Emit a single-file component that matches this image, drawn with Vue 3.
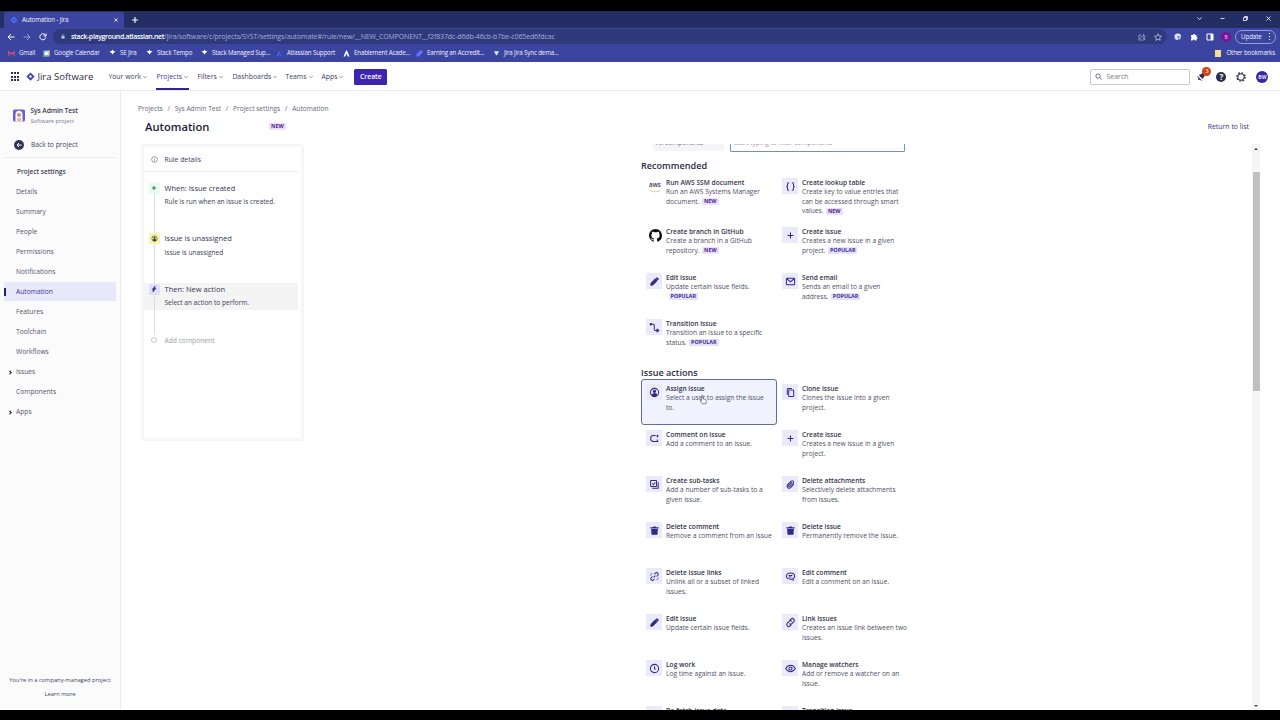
<script setup>
const icons = {
  edit: '<path fill="currentColor" d="M4.500 16 14 6.500l3.500 3.500L8 19.500 4 20.200zM16.300 4.800l1-1 3 3-1 1z"/>',
  braces: '<path d="M9 4H7.500C6 4 5.500 5 5.500 6.500v3C5.500 11 5 12 3.500 12 5 12 5.500 13 5.500 14.500v3C5.500 19 6 20 7.500 20H9M15 4h1.500c1.500 0 2 1 2 2.500v3c0 1.500.5 2.500 2 2.500-1.500 0-2 1-2 2.500v3c0 1.500-.5 2.500-2 2.500H15"/>',
  plus: '<path d="M12 5.500v13M5.500 12h13"/>',
  mail: '<rect x="3" y="5" width="18" height="14" rx="1.500"/><path d="m4 6 8 7 8-7"/>',
  transition: '<path d="M4 5h5.500a2 2 0 0 1 2 2v9.500a2 2 0 0 0 2 2H20"/><circle cx="4" cy="5" r="1.500" fill="currentColor"/><path d="m17.500 15.500 4 3-4 3z" fill="currentColor"/>',
  user: '<circle cx="12" cy="12" r="9"/><circle cx="12" cy="9.500" r="2.500" fill="currentColor"/><path fill="currentColor" d="M7 18c0-2.500 1.300-3.500 2.800-3.500h4.400c1.500 0 2.800 1 2.800 3.500-3 3-7 3-10 0z"/>',
  clone: '<rect x="8" y="6.500" width="11" height="14" rx="1.500"/><path d="M5 17V5a1.500 1.500 0 0 1 1.500-1.500H15"/>',
  comment: '<path d="M14.500 5.500H10a6.500 6.500 0 0 0 0 13h9.500l-1.500-2V14"/><path d="M18.500 4v5M16 6.500h5"/>',
  subtasks: '<rect x="3.500" y="3.500" width="13" height="13" rx="1"/><path d="m7 10 2.500 2.500L14 7.500M20 7v13H7"/>',
  clip: '<path d="m19.500 11.500-7.200 7.300a4.600 4.600 0 0 1-6.500-6.500L13.500 4.500a3.200 3.200 0 0 1 4.500 4.500l-7.300 7.400a1.700 1.700 0 0 1-2.500-2.400L15 7.300"/>',
  trash: '<path fill="currentColor" stroke="none" d="M3 5h5.500l1-1.500h5l1 1.500H21v2.500H3zM4.500 8.500h15L18.500 20a1.500 1.500 0 0 1-1.500 1.500H7A1.500 1.500 0 0 1 5.500 20z"/>',
  unlink: '<path d="m12 7 2-2.500a3.500 3.500 0 0 1 5 5L16.500 12M12 17l-2 2.500a3.500 3.500 0 0 1-5-5L7.500 12M10 14l4-4"/><path d="M5.500 4.500 7 6M3 8.500h2M17 18l1.500 1.500M19 15.500h2"/>',
  talk: '<path d="M12 4.500c5 0 9 2.800 9 6.700 0 2.500-1.500 4.200-3.500 5.300l.5 3.500-4.500-2.300c-6 .6-10.500-2.500-10.500-6.500 0-3.900 4-6.700 9-6.700zM8 10h8M8 13h6"/>',
  link: '<path d="m10 7.500 3-3a4 4 0 0 1 6 6l-4 4a4 4 0 0 1-6 0M14 16.500l-3 3a4 4 0 0 1-6-6l4-4a4 4 0 0 1 6 0"/>',
  clock: '<circle cx="12" cy="12" r="9"/><path d="M12 7v5.500l3 1.500"/>',
  eye: '<path d="M1.500 12C4.500 7 8 5 12 5s7.500 2 10.500 7c-3 5-6.500 7-10.500 7S4.500 17 1.500 12z"/><circle cx="12" cy="12" r="3.500"/>',
  refresh: '<path d="M19 12a7 7 0 1 1-2-5l2 2M19 4v5h-5"/>'
}
const recommended = [
  { icon: 'aws', title: 'Run AWS SSM document', lines: ['Run an AWS Systems Manager', 'document.'], tag: 'NEW' },
  { icon: 'braces', title: 'Create lookup table', lines: ['Create key to value entries that', 'can be accessed through smart', 'values.'], tag: 'NEW' },
  { icon: 'github', title: 'Create branch in GitHub', lines: ['Create a branch in a GitHub', 'repository.'], tag: 'NEW' },
  { icon: 'plus', title: 'Create issue', lines: ['Creates a new issue in a given', 'project.'], tag: 'POPULAR' },
  { icon: 'edit', title: 'Edit issue', lines: ['Update certain issue fields.', ''], tag: 'POPULAR' },
  { icon: 'mail', title: 'Send email', lines: ['Sends an email to a given', 'address.'], tag: 'POPULAR' },
  { icon: 'transition', title: 'Transition issue', lines: ['Transition an issue to a specific', 'status.'], tag: 'POPULAR' }
]
const actions = [
  { icon: 'user', title: 'Assign issue', lines: ['Select a user to assign the issue', 'to.'], active: true },
  { icon: 'clone', title: 'Clone issue', lines: ['Clones the issue into a given', 'project.'] },
  { icon: 'comment', title: 'Comment on issue', lines: ['Add a comment to an issue.'] },
  { icon: 'plus', title: 'Create issue', lines: ['Creates a new issue in a given', 'project.'] },
  { icon: 'subtasks', title: 'Create sub-tasks', lines: ['Add a number of sub-tasks to a', 'given issue.'] },
  { icon: 'clip', title: 'Delete attachments', lines: ['Selectively delete attachments', 'from issues.'] },
  { icon: 'trash', title: 'Delete comment', lines: ['Remove a comment from an issue'] },
  { icon: 'trash', title: 'Delete issue', lines: ['Permanently remove the issue.'] },
  { icon: 'unlink', title: 'Delete issue links', lines: ['Unlink all or a subset of linked', 'issues.'] },
  { icon: 'talk', title: 'Edit comment', lines: ['Edit a comment on an issue.'] },
  { icon: 'edit', title: 'Edit issue', lines: ['Update certain issue fields.'] },
  { icon: 'link', title: 'Link issues', lines: ['Creates an issue link between two', 'issues.'] },
  { icon: 'clock', title: 'Log work', lines: ['Log time against an issue.'] },
  { icon: 'eye', title: 'Manage watchers', lines: ['Add or remove a watcher on an', 'issue.'] },
  { icon: 'refresh', title: 'Re-fetch issue data', lines: [] },
  { icon: 'transition', title: 'Transition issue', lines: [] }
]
const sections = [
  { name: 'Recommended', items: recommended },
  { name: 'Issue actions', items: actions }
]
const bookmarks = [
  ['gmail', 'Gmail'], ['cal', 'Google Calendar'], ['stack', 'SE Jira'], ['stack', 'Stack Tempo'],
  ['stack', 'Stack Managed Sup...'], ['atl', 'Atlassian Support'], ['atlw', 'Enablement Acade...'],
  ['pen', 'Earning an Accredit...'], ['vee', 'Jira Jira Sync dema...']
]
const menu = ['Your work', 'Projects', 'Filters', 'Dashboards', 'Teams', 'Apps']
const settings = ['Details', 'Summary', 'People', 'Permissions', 'Notifications', 'Automation', 'Features', 'Toolchain', 'Workflows', 'Issues', 'Components', 'Apps']
const crumbs = ['Projects', 'Sys Admin Test', 'Project settings', 'Automation']
</script>

<template>
  <div class="screen">
    <div class="tabs">
      <div class="tab">
        <svg class="jira-tab" viewBox="0 0 24 24"><path fill="#4a6cff" fill-rule="evenodd" d="M12 1 23 12 12 23 1 12zM12 8l-4 4 4 4 4-4z" /></svg>
        <span>Automation - Jira</span>
        <svg class="x" viewBox="0 0 10 10"><path d="m1 1 8 8M9 1 1 9" /></svg>
      </div>
      <svg class="newtab" viewBox="0 0 10 10"><path d="M5 0v10M0 5h10" /></svg>
      <div class="wincontrols">
        <svg viewBox="0 0 10 10"><path d="m1 3 4 4 4-4" /></svg>
        <svg viewBox="0 0 10 10"><path d="M1 5h8" /></svg>
        <svg viewBox="0 0 10 10"><path d="M1 3h6v6H1zM3 3V1h6v6H7" /></svg>
        <svg viewBox="0 0 10 10"><path d="m1 1 8 8M9 1 1 9" /></svg>
      </div>
    </div>

    <div class="toolbar">
      <svg class="tb" viewBox="0 0 16 16"><path d="M15 8H2M8 2 2 8l6 6" /></svg>
      <svg class="tb dim" viewBox="0 0 16 16"><path d="M1 8h13M8 2l6 6-6 6" /></svg>
      <svg class="tb" viewBox="0 0 16 16"><path d="M13.500 9A6 6 0 1 1 12 3.500L14 5.500M14 1v5H9" /></svg>
      <div class="url">
        <svg class="lock" viewBox="0 0 10 12"><path d="M1 5h8v6H1z" fill="#c5c9e6" /><path d="M3 5V3a2 2 0 0 1 4 0v2" fill="none" stroke="#c5c9e6" stroke-width="1.300" /></svg>
        <span class="addr"><b>stack-playground.atlassian.net</b><i>/jira/software/c/projects/SYST/settings/automate#/rule/new/__NEW_COMPONENT__f2f837dc-d6db-46cb-b7be-c065ed6fdcac</i></span>
        <svg class="share" viewBox="0 0 16 16"><path d="M6 4H2v10h11v-4M5 11c0-4 3-5 6-5V3l4 4-4 4V8" /></svg>
        <svg class="star" viewBox="0 0 16 16"><path d="m8 1.500 2 4.500 5 .5-3.700 3.300 1 4.900L8 12.200l-4.300 2.500 1-4.900L1 6.500 6 6z" /></svg>
      </div>
      <div class="ext">
        <svg viewBox="0 0 16 16"><circle cx="7.500" cy="7.500" r="6.500" fill="#dfe5fa" /><path d="m8 6 1 9 2-3 4-1z" fill="#fff" stroke="#3b479e" stroke-width="1.500" /></svg>
        <svg viewBox="0 0 16 16"><path fill="#fff" d="M2 4h4a2 2 0 1 1 4 0h3v4a2 2 0 1 1 0 4v3H9.500a2 2 0 0 0-4 0H2v-4a2 2 0 0 0 0-3.500z" /></svg>
        <svg viewBox="0 0 16 16"><path d="M2 2h12v12H2z" fill="none" stroke="#fff" stroke-width="2" /><path fill="#fff" d="M9 2h5v12H9z" /></svg>
        <span class="me">B</span>
      </div>
      <div class="update"><span>Update</span><em></em></div>
    </div>

    <div class="bookmarks">
      <div v-for="([ic, label], n) in bookmarks" :key="n" class="bm">
        <svg viewBox="0 0 16 16">
          <path v-if="ic === 'gmail'" d="M2 14V4l6 5 6-5v10" fill="none" stroke="#d9526d" stroke-width="2.500" />
          <g v-else-if="ic === 'cal'"><path d="M1 1h14v14H1z" fill="#7fb2ee" /><path d="M4 4h8v8H4z" fill="#fff" /><path d="M1 12h11v3H1z" fill="#59b884" /><path d="M12 1h3v11h-3z" fill="#e8cf63" /></g>
          <path v-else-if="ic === 'stack'" d="M8-1l2 3 5 1-4 3-3 4-3-4-4-3 5-1z" fill="#fff" />
          <path v-else-if="ic === 'atl'" d="M1 15 7 1l3 6-2 2-2 6zM10 8l4 7H9z" fill="#3c66ef" />
          <path v-else-if="ic === 'atlw'" d="M1 15 7 1h2l6 14h-4L8 8l-3 7z" fill="#fff" />
          <path v-else-if="ic === 'pen'" d="M1 15V9L9 1h6v5l-9 9z" fill="#6672ff" />
          <path v-else d="M2 3h12L9 12H7z" fill="#c8ecec" />
        </svg>
        <span>{{ label }}</span>
      </div>
      <div class="other"><i></i><span>Other bookmarks</span></div>
    </div>

    <header class="nav">
      <div class="dots"><i v-for="n in 9" :key="n"></i></div>
      <svg class="jira" viewBox="0 0 24 24"><path fill="#4444c8" fill-rule="evenodd" d="M12 1 23 12 12 23 1 12zM12 8l-4 4 4 4 4-4z" /></svg>
      <span class="brand">Jira Software</span>
      <nav class="menu">
        <div v-for="m in menu" :key="m" :class="{ on: m === 'Projects' }">
          <span>{{ m }}</span>
          <svg viewBox="0 0 10 10"><path d="m1 3 4 4 4-4" /></svg>
        </div>
      </nav>
      <button class="create">Create</button>
      <div class="search">
        <svg viewBox="0 0 16 16"><circle cx="7" cy="7" r="5" /><path d="m11 11 4 4" /></svg>
        <span>Search</span>
      </div>
      <div class="bell">
        <svg viewBox="0 0 16 16"><path d="M9 1.500 14.500 7c-3 .5-3 4-4.500 5.500L3.500 6C5 4.500 8.500 4.500 9 1.500zM1 7l8 8-1.500.5L.5 8.500zM3 10l3 3-2.500 1.500-2-2z" fill="#2b2b4d" /></svg>
        <b>3</b>
      </div>
      <div class="help">?</div>
      <svg class="gear" viewBox="0 0 16 16"><circle cx="8" cy="8" r="5.200" fill="none" stroke="#2b2b4d" stroke-width="1.600" /><circle cx="8" cy="8" r="6.500" fill="none" stroke="#2b2b4d" stroke-width="2.400" stroke-dasharray="2.600 2.500" /></svg>
      <div class="avatar">BW</div>
    </header>

    <div class="body">
      <aside class="side">
        <div class="project">
          <svg viewBox="0 0 24 24"><rect width="24" height="24" rx="3" fill="#6a62d2" /><path d="M5 24V9c0-9 14-9 14 0v15z" fill="#fff" /><circle cx="12" cy="11" r="4" fill="#d9838c" /><path d="M8 17h8v6H8z" fill="#efb5a4" /></svg>
          <div><p class="pname">Sys Admin Test</p><p class="ptype">Software project</p></div>
        </div>
        <div class="back">
          <svg viewBox="0 0 20 20"><circle cx="10" cy="10" r="10" fill="#34345a" /><path d="M15 10H6m4-4-4 4 4 4" fill="none" stroke="#fff" stroke-width="2" /></svg>
          <span>Back to project</span>
        </div>
        <h4>Project settings</h4>
        <ul>
          <li v-for="(s, n) in settings" :key="n" :class="{ on: s === 'Automation' }">
            <svg v-if="s === 'Issues' || s === 'Apps'" viewBox="0 0 10 10"><path d="m3 1.500 3.500 3.500L3 8.500" /></svg>{{ s }}
          </li>
        </ul>
        <footer><p>You're in a company-managed project</p><p>Learn more</p></footer>
      </aside>

      <main>
        <div class="crumbs"><template v-for="(c, n) in crumbs" :key="c"><i v-if="n">/</i><span>{{ c }}</span></template></div>
        <div class="titlebar"><h1>Automation</h1><span class="tag new">NEW</span><a>Return to list</a></div>
        <div class="content">
          <section class="rule">
            <div class="details"><svg viewBox="0 0 16 16"><circle cx="8" cy="8" r="6.500" /><path d="M8 7v5M8 4v1.500" /></svg><span>Rule details</span></div>
            <div class="step">
              <div class="rail"><i class="badge green"><svg viewBox="0 0 10 10"><path d="M5 1.500v7M1.500 5h7" stroke="#277a5c" stroke-width="1.600" /></svg></i></div>
              <div class="txt"><p>When: Issue created</p><small>Rule is run when an issue is created.</small></div>
            </div>
            <div class="step">
              <div class="rail"><i class="badge yellow"><svg class="big" viewBox="0 0 24 24" v-html="icons.user"></svg></i></div>
              <div class="txt"><p>Issue is unassigned</p><small>Issue is unassigned</small></div>
            </div>
            <div class="step sel">
              <div class="rail"><i class="badge blue"><svg viewBox="0 0 10 10"><path d="M7 0 2 6h2.500L3 10l5-6H5.500z" fill="#252069" stroke="#252069" /></svg></i></div>
              <div class="txt"><p>Then: New action</p><small>Select an action to perform.</small></div>
            </div>
            <div class="step last">
              <div class="rail"><i class="ring"></i></div>
              <div class="txt"><p>Add component</p></div>
            </div>
          </section>

          <section class="picker">
            <div class="filter"><div class="all">All components</div><div class="input">Start typing to filter components</div></div>
            <template v-for="sec in sections" :key="sec.name">
              <h2>{{ sec.name }}</h2>
              <div class="grid" :class="{ tall: sec.name === 'Recommended' }">
                <div v-for="(it, n) in sec.items" :key="n" class="card" :class="{ active: it.active }">
                  <div v-if="it.icon === 'aws'" class="ico plain aws"><span>aws</span><svg viewBox="0 0 16 4"><path d="M1 .8c5 3 10 3 14 0" fill="none" stroke="#dccb70" stroke-width="1.200" /></svg></div>
                  <div v-else-if="it.icon === 'github'" class="ico plain">
                    <svg class="gh" viewBox="0 0 16 16"><path fill="#111" d="M8 0C3.580 0 0 3.580 0 8c0 3.540 2.290 6.530 5.470 7.590.4.070.55-.17.55-.38 0-.19-.01-.82-.01-1.490-2.010.37-2.530-.49-2.690-.94-.09-.23-.48-.94-.82-1.130-.28-.15-.68-.52-.01-.53.63-.01 1.080.58 1.230.82.72 1.210 1.870.87 2.330.66.070-.52.28-.87.51-1.070-1.780-.2-3.640-.89-3.640-3.950 0-.87.31-1.590.82-2.150-.08-.2-.36-1.020.08-2.120 0 0 .67-.21 2.200.82a7.600 7.600 0 0 1 4 0c1.530-1.040 2.200-.82 2.200-.82.44 1.100.16 1.920.08 2.120.51.56.82 1.270.82 2.150 0 3.070-1.870 3.750-3.650 3.950.29.25.54.73.54 1.480 0 1.070-.01 1.930-.01 2.200 0 .21.15.46.55.38A8 8 0 0 0 16 8c0-4.420-3.580-8-8-8z" /></svg>
                  </div>
                  <div v-else class="ico"><svg viewBox="0 0 24 24" v-html="icons[it.icon]"></svg></div>
                  <div class="ctext">
                    <p class="ct">{{ it.title }}</p>
                    <p v-for="(l, k) in it.lines" :key="k" class="cl">{{ l }}<span v-if="it.tag && k === it.lines.length - 1" class="tag" :class="it.tag.toLowerCase()">{{ it.tag }}</span></p>
                  </div>
                </div>
              </div>
            </template>
          </section>

          <div class="scroll"><i class="up"></i><div class="thumb"></div><i class="down"></i></div>
        </div>
      </main>
    </div>
    <div class="bottom"></div>
    <svg class="cursor" viewBox="0 0 12 16"><path d="M4 9V2.500a1 1 0 0 1 2 0V7l4 1c1 .3 1 1 .9 2l-.6 4.500H5L2 10.500C1.500 9.500 2.500 9 4 10z" fill="#fff" stroke="#4b4b60" /></svg>
  </div>
</template>

<style>
html, body { margin: 0; background: #000; overflow: hidden; }
</style>

<style scoped>
* { box-sizing: border-box; }
p, h1, h2, h4, ul { margin: 0; padding: 0; font-weight: 400; }
i, em { font-style: normal; }
svg { display: block; flex: none; overflow: visible; }
.screen { position: relative; width: 1280px; height: 720px; display: flex; flex-direction: column; padding-top: 11px; background: #000; font: 7px/10px "Open Sans", "Noto Sans", sans-serif; color: #42425c; white-space: nowrap; overflow: hidden; }

.tabs { height: 17px; flex: none; display: flex; align-items: center; background: #242e64; padding-left: 4px; }
.tab { width: 120px; height: 16px; align-self: flex-end; display: flex; align-items: center; padding: 0 6px; background: #3b459f; border-radius: 3px 3px 0 0; color: #f0f1fc; font-size: 6.300px; letter-spacing: -.18px; font-weight: 500; }
.jira-tab { width: 8px; height: 8px; margin-right: 4px; }
.x { width: 4px; height: 4px; margin-left: auto; stroke: #fff; stroke-width: 2; }
.newtab { width: 6px; height: 6px; margin-left: 8px; stroke: #fff; stroke-width: 1.800; }
.wincontrols { display: flex; gap: 18px; margin: 0 9px 2px auto; }
.wincontrols svg { width: 5px; height: 5px; fill: none; stroke: #e8e9f8; stroke-width: 1.800; }

.toolbar { height: 17px; flex: none; display: flex; align-items: center; background: #3b459f; padding-left: 7px; }
.tb { width: 8px; height: 8px; margin-right: 8px; fill: none; stroke: #fff; stroke-width: 2; }
.tb.dim { stroke: #969dd2; }
.url { width: 1114px; height: 15px; margin-left: -2px; display: flex; align-items: center; background: #2f3a7c; border-radius: 8px; padding: 0 5px 0 8px; }
.lock { width: 4px; height: 5px; margin-right: 6px; }
.addr { font-size: 7px; }
.addr b { font-weight: 600; color: #fff; letter-spacing: -.35px; }
.addr i { color: #a5acd7; letter-spacing: -.12px; }
.share { width: 8px; height: 8px; margin-left: auto; margin-right: 8px; fill: none; stroke: #aeb4dc; stroke-width: 1.400; }
.star { width: 8px; height: 8px; fill: none; stroke: #c8cdf0; stroke-width: 1.500; }
.ext { display: flex; align-items: center; gap: 8px; margin-left: 7px; }
.ext svg { width: 8px; height: 8px; }
.me { width: 10px; height: 10px; margin-left: -1px; border-radius: 50%; background: #7c0f9b; color: #f0d0f5; font-size: 5px; text-align: center; }
.update { width: 41px; height: 14px; margin-left: 4px; border: 1px solid #969dd6; border-radius: 7px; display: flex; align-items: center; justify-content: space-between; padding: 0 5px; color: #eceefb; font-size: 6.300px; letter-spacing: -.15px; }
.update em { width: 1px; height: 1px; background: #fff; box-shadow: 0 -3px #fff, 0 3px #fff; }

.bookmarks { height: 17px; flex: none; display: grid; grid-template-columns: 35px 66px 37px 55px 75px 67px 73px 77px 100px 1fr; align-items: center; padding: 0 5px 1px 8px; background: #3b459f; color: #f0f1fc; font-size: 6.200px; letter-spacing: -.15px; font-weight: 500; }
.bm { display: flex; align-items: center; gap: 4px; }
.bm svg { width: 7px; height: 7px; }
.other { display: flex; align-items: center; justify-content: flex-end; gap: 5px; }
.other i { width: 6px; height: 7px; background: #f2e08a; }

.nav { height: 29px; flex: none; display: flex; align-items: center; background: #fff; border-bottom: 1px solid #ebebef; padding: 1px 0 0 11px; }
.dots { display: grid; grid-template-columns: repeat(3, 2px); gap: 1.200px; }
.dots i { width: 2px; height: 2px; background: #2a2a4a; }
.jira { width: 9px; height: 9px; margin-left: 7px; }
.brand { width: 71px; margin-left: 2px; font-size: 9.500px; color: #2c2c48; }
.menu { height: 100%; display: grid; grid-template-columns: 48px 41px 35px 53px 36px 33px; }
.menu div { display: flex; align-items: center; font-weight: 500; font-size: 6.900px; color: #40405e; }
.menu svg { width: 4px; height: 4px; margin: 1px 0 0 2px; fill: none; stroke: #66667e; stroke-width: 1.800; }
.menu .on { color: #4239a8; width: 33px; border-bottom: 2px solid #2f2894; padding-top: 2px; }
.create { width: 33px; height: 16px; border: 0; border-radius: 1.500px; background: #3e25b0; color: #fff; font: 600 6.800px/16px "Open Sans", sans-serif; padding: 0; }
.search { width: 100px; height: 16px; margin-left: 703px; border: 1px solid #c6c7d0; border-radius: 2px; display: flex; align-items: center; gap: 4px; padding-left: 4px; color: #77778a; }
.search svg { width: 7px; height: 7px; fill: none; stroke: #44445f; stroke-width: 1.700; }
.bell { position: relative; margin-left: 7px; }
.bell svg { width: 9px; height: 9px; }
.bell b { position: absolute; left: 5px; top: -5px; width: 9px; height: 9px; border-radius: 50%; background: #cb4217; color: #ffe2d5; font: 600 6px/9px "Open Sans", sans-serif; text-align: center; }
.help { width: 10px; height: 10px; margin-left: 10px; border-radius: 50%; background: #2b2b4d; color: #fff; font-weight: 700; font-size: 8px; text-align: center; }
.gear { width: 10px; height: 10px; margin-left: 10px; }
.avatar { width: 12px; height: 12px; margin-left: 10px; border-radius: 50%; background: #3826a5; color: #e6e2ff; font-size: 5px; font-weight: 700; line-height: 12px; text-align: center; }

.body { flex: 1; min-height: 0; display: flex; background: #fff; }
.side { width: 121px; flex: none; background: #fbfbfc; border-right: 1px solid #ececf0; display: flex; flex-direction: column; }
.project { display: flex; align-items: center; height: 20px; margin-top: 15px; padding-left: 13px; gap: 5.500px; }
.project svg { width: 12px; height: 13px; margin-top: -2px; }
.pname { font-weight: 600; font-size: 6.700px; letter-spacing: -.1px; color: #38384f; }
.ptype { font-size: 5.700px; color: #77778c; }
.back { height: 32px; margin: 0 4px; padding: 7px 0 0 10px; display: flex; gap: 6px; line-height: 24px; font-size: 6.700px; border-bottom: 1px solid #ececf0; }
.back svg { width: 10px; height: 10px; margin: 7px 1px 0 0; }
h4 { margin: 9px 0 5px 17px; font-weight: 600; font-size: 6.500px; color: #3c3c54; }
ul { list-style: none; }
li { position: relative; width: 112px; height: 20px; line-height: 20px; margin-left: 4px; padding-left: 12px; font-size: 6.700px; color: #55556c; }
li svg { position: absolute; left: 4px; top: 7.500px; width: 5px; height: 5px; fill: none; stroke: #30304a; stroke-width: 2.200; }
li.on { background: linear-gradient(#e8e8fb, #e8e8fb) 0 0 / 100% 19px no-repeat; color: #3c3794; }
li.on::before { content: ""; position: absolute; left: 0; top: 6px; width: 2px; height: 8px; background: #28205f; }
footer { margin-top: auto; text-align: center; padding-bottom: 9.500px; line-height: 14px; font-size: 5.800px; letter-spacing: -.03px; }

main { flex: 1; min-width: 0; display: flex; flex-direction: column; }
.crumbs { display: flex; margin: 12.500px 0 0 17px; color: #66667c; font-size: 6.600px; }
.crumbs i { width: 12px; text-align: center; }
.titlebar { display: flex; align-items: center; height: 18px; margin-top: 4.500px; padding-left: 24px; }
h1 { width: 124px; font-size: 11.200px; font-weight: 600; color: #1c1c38; }
.titlebar .tag { margin-top: -1px; }
.titlebar a { margin: 0 31px 0 auto; color: #352f92; font-weight: 500; font-size: 6.900px; }
.tag { display: inline-block; height: 7px; line-height: 7px; padding: 0 2px; border-radius: 1px; background: #e6e1fb; color: #3e2c99; font-weight: 700; font-size: 5.400px; vertical-align: .4px; }
.tag.new { color: #4c1f93; background: #ebdffb; }
.content { flex: 1; min-height: 0; display: flex; margin-top: 8px; overflow: hidden; }
.rule { width: 163px; height: 297px; margin: 0 0 0 20px; border: 3px solid #f6f6f7; border-radius: 2px; background: #fff; flex: none; }
.details { height: 25px; display: flex; align-items: center; gap: 6.500px; padding: 1px 0 0 7px; border-bottom: 1px solid #ececef; margin-right: 3px; font-size: 6.800px; }
.details svg { width: 7px; height: 7px; fill: none; stroke: #55556a; stroke-width: 1.300; }
.step { display: flex; height: 50.500px; margin-right: 3px; }
.details + .step { margin-top: 10.500px; }
.rail { width: 20.500px; padding-right: .5px; display: flex; justify-content: center; background: linear-gradient(#dedee4, #dedee4) 10px 0 / 1px 100% no-repeat; }
.badge { width: 11px; height: 11px; display: grid; place-items: center; background: #e9faf0; }
.badge svg { width: 6px; height: 6px; fill: none; }
.badge .big { width: 7px; height: 7px; color: #303020; stroke: #303020; stroke-width: 2; }
.badge.yellow { background: #f8f5ae; }
.badge.blue { background: #e2dffb; }
.txt p { font-size: 7.500px; line-height: 11px; color: #34344e; }
.txt small { display: block; font-size: 6.550px; margin-top: 3.500px; color: #3c3c54; }
.sel { background: linear-gradient(#f4f4f5, #f4f4f5) 0 0 / 100% 26px no-repeat; box-shadow: 0 -1px #f4f4f5; }
.ring { width: 6px; height: 6px; border: 1px solid #c8c8d0; border-radius: 50%; background: #fff; margin: 3px 0 0; }
.last .rail { background: none; }
.last p { color: #9c9cab; font-size: 6.700px; line-height: 13px; }

.picker { width: 272px; margin-left: 337px; flex: none; }
.filter { display: flex; align-items: flex-end; height: 28px; margin-top: -20px; padding-left: 12px; line-height: 18px; color: #9090a2; font-size: 6.500px; }
.all { width: 71px; height: 22px; padding-left: 3px; background: #f5f5f8; color: #6c6c80; line-height: 27px; margin-bottom: 1px; }
.input { width: 175px; height: 22px; margin-left: 6px; padding-left: 3px; border: 1px solid #7391b8; border-radius: 1px; background: #fff; line-height: 23px; }
h2 { height: 20px; padding-top: 8px; line-height: 12px; font-size: 9.100px; font-weight: 600; color: #2c2c48; }
.grid + h2 { height: 19px; padding-top: 7px; }
.grid { display: grid; grid-template-columns: 136px 136px; grid-auto-rows: 46px; }
.grid.tall { grid-template-rows: 49px; padding-top: 1px; }
.card { display: flex; gap: 4px; padding: 4px 0 0 4px; border: 1px solid transparent; border-radius: 3px; }
.card.active { border-color: #5f6ca8; background: #f0f2fe; }
.ico { width: 16px; height: 16px; flex: none; display: grid; place-items: center; background: #ebeafb; }
.ico svg { width: 11px; height: 11px; fill: none; stroke: #302a86; stroke-width: 2.200; stroke-linejoin: round; color: #302a86; }
.ico.plain { background: none; }
.ico .gh { width: 13px; height: 13px; stroke: none; margin-left: 2px; }
.ico.aws { display: block; padding: 4px 0 0 2px; font-weight: 600; font-size: 6.300px; line-height: 6px; text-align: center; color: #40404f; }
.aws svg { width: 12px; height: 4px; margin: 1px auto 0; }
.ctext p { line-height: 9.500px; }
.ctext .ct { line-height: 9px; font-weight: 600; font-size: 6.650px; color: #34344c; }
.ctext .cl { font-size: 6.650px; color: #505066; }
.cl .tag { margin-left: 2.500px; }

.scroll { width: 8px; margin: 0 20px 0 auto; background: #f6f6f6; display: flex; flex-direction: column; align-items: center; padding: 4px 0 3px; }
.up { border: 2px solid transparent; border-top: 0; border-bottom: 2.500px solid #444; }
.down { border: 2px solid transparent; border-bottom: 0; border-top: 2.500px solid #444; margin-top: auto; }
.thumb { width: 7px; height: 219px; margin-top: 22px; background: #c0c0c0; }
.bottom { height: 10px; flex: none; background: #000; }
.cursor { position: absolute; left: 699px; top: 394px; width: 8px; height: 11px; }
</style>
